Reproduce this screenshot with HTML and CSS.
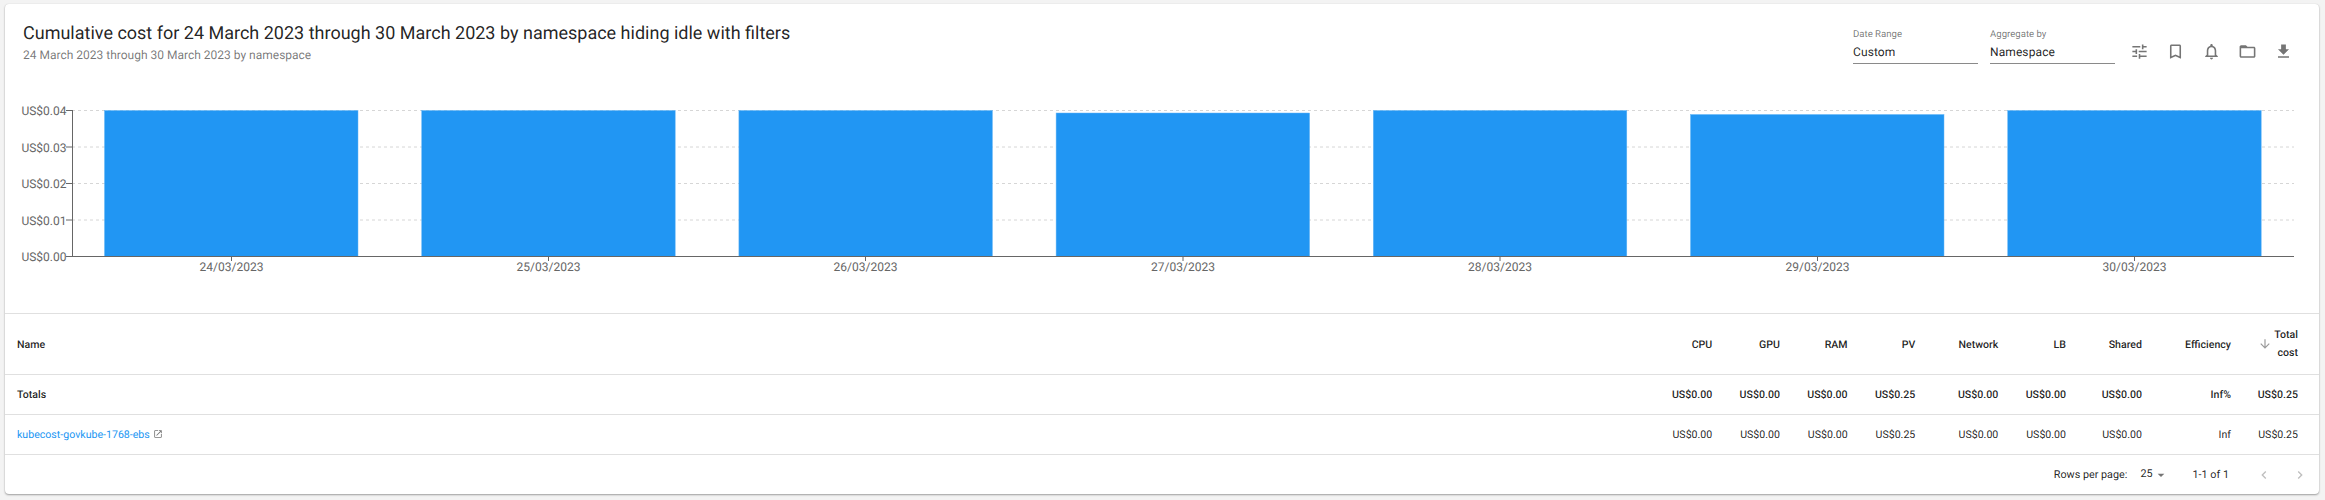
FILE: index.html
```html
<!DOCTYPE html>
<html lang="en">
<head>
<meta charset="utf-8">
<title>Cumulative cost</title>
<link rel="stylesheet" href="styles.css">
</head>
<body>
<main class="paper">
  <header class="head">
    <div class="titles">
      <h1 class="title">Cumulative cost for 24 March 2023 through 30 March 2023 by namespace hiding idle with filters</h1>
      <p class="subtitle">24 March 2023 through 30 March 2023 by namespace</p>
    </div>
    <div class="controls">
      <div class="field"><span class="field-label">Date Range</span><span class="field-value">Custom</span></div>
      <div class="field"><span class="field-label">Aggregate by</span><span class="field-value">Namespace</span></div>
      <div class="actions">
        <svg class="icon" viewBox="0 0 24 24"><path d="M3 17v2h6v-2H3zM3 5v2h10V5H3zm10 16v-2h8v-2h-8v-2h-2v6h2zM7 9v2H3v2h4v2h2V9H7zm14 4v-2H11v2h10zm-6-4h2V7h4V5h-4V3h-2v6z"/></svg>
        <svg class="icon" viewBox="0 0 24 24"><path d="M17 3H7c-1.1 0-1.99.9-1.99 2L5 21l7-3 7 3V5c0-1.1-.9-2-2-2zm0 15l-5-2.18L7 18V5h10v13z"/></svg>
        <svg class="icon" viewBox="0 0 24 24"><path d="M12 22c1.1 0 2-.9 2-2h-4c0 1.1.9 2 2 2zm6-6v-5c0-3.07-1.63-5.64-4.5-6.32V4c0-.83-.67-1.5-1.5-1.5s-1.5.67-1.5 1.5v.68C7.64 5.36 6 7.92 6 11v5l-2 2v1h16v-1l-2-2zm-2 1H8v-6c0-2.48 1.51-4.5 4-4.5s4 2.02 4 4.5v6z"/></svg>
        <svg class="icon" viewBox="0 0 24 24"><path d="M20 6h-8l-2-2H4c-1.1 0-1.99.9-1.99 2L2 18c0 1.1.9 2 2 2h16c1.1 0 2-.9 2-2V8c0-1.1-.9-2-2-2zm0 12H4V8h16v10z"/></svg>
        <svg class="icon" viewBox="0 0 24 24"><path d="M19 9h-4V3H9v6H5l7 7 7-7zM5 18v2h14v-2H5z"/></svg>
      </div>
    </div>
  </header>

  <svg class="chart" viewBox="5 100 2314 213">
    <g class="grid">
      <line x1="72" x2="2294" y1="110.5" y2="110.5"/>
      <line x1="72" x2="2294" y1="147" y2="147"/>
      <line x1="72" x2="2294" y1="183.5" y2="183.5"/>
      <line x1="72" x2="2294" y1="220" y2="220"/>
      <line x1="72" x2="2294" y1="256.5" y2="256.5"/>
    </g>
    <g class="bars">
      <rect x="104.5" y="110.5" width="253.5" height="146"/>
      <rect x="421.7" y="110.5" width="253.5" height="146"/>
      <rect x="738.9" y="110.5" width="253.5" height="146"/>
      <rect x="1056.1" y="113" width="253.5" height="143.5"/>
      <rect x="1373.3" y="110.5" width="253.5" height="146"/>
      <rect x="1690.5" y="114.5" width="253.5" height="142"/>
      <rect x="2007.7" y="110.5" width="253.5" height="146"/>
    </g>
    <g class="axis">
      <path d="M72.5 110v147M66 110.5h6M66 147h6M66 183.5h6M66 220h6M66 256.5h2228"/>
      <path d="M231.5 257v4M548.5 257v4M865.5 257v4M1183 257v4M1500 257v4M1817.5 257v4M2134.5 257v4"/>
    </g>
    <g class="y-labels">
      <text x="66.5" y="115">US$0.04</text>
      <text x="66.5" y="151.5">US$0.03</text>
      <text x="66.5" y="188">US$0.02</text>
      <text x="66.5" y="224.5">US$0.01</text>
      <text x="66.5" y="261">US$0.00</text>
    </g>
    <g class="x-labels">
      <text x="231.5" y="271">24/03/2023</text>
      <text x="548.5" y="271">25/03/2023</text>
      <text x="865.5" y="271">26/03/2023</text>
      <text x="1183" y="271">27/03/2023</text>
      <text x="1500" y="271">28/03/2023</text>
      <text x="1817.5" y="271">29/03/2023</text>
      <text x="2134.5" y="271">30/03/2023</text>
    </g>
  </svg>

  <table class="table">
    <colgroup>
      <col>
      <col class="c68"><col class="c68"><col class="c68"><col class="c68">
      <col class="c83"><col class="c68"><col class="c76"><col class="c89"><col class="c67">
    </colgroup>
    <thead>
      <tr class="row-head">
        <th class="name">Name</th>
        <th>CPU</th><th>GPU</th><th>RAM</th><th>PV</th><th>Network</th><th>LB</th><th>Shared</th><th>Efficiency</th>
        <th class="total-head">
          <span class="sort-wrap">
            <svg class="sort" viewBox="0 0 24 24"><path d="M20 12l-1.41-1.41L13 16.17V4h-2v12.17l-5.58-5.59L4 12l8 8 8-8z"/></svg>
            <span class="total-label">Total cost</span>
          </span>
        </th>
      </tr>
    </thead>
    <tbody>
      <tr class="row-total">
        <td class="name">Totals</td>
        <td>US$0.00</td><td>US$0.00</td><td>US$0.00</td><td>US$0.25</td><td>US$0.00</td><td>US$0.00</td><td>US$0.00</td><td>Inf%</td><td>US$0.25</td>
      </tr>
      <tr class="row-data">
        <td class="name"><a class="link" href="#">kubecost-govkube-1768-ebs</a><svg class="ext" viewBox="0 0 24 24"><path d="M19 19H5V5h7V3H5c-1.11 0-2 .9-2 2v14c0 1.1.89 2 2 2h14c1.1 0 2-.9 2-2v-7h-2v7zM14 3v2h3.59l-9.83 9.83 1.41 1.41L19 6.41V10h2V3h-7z"/></svg></td>
        <td>US$0.00</td><td>US$0.00</td><td>US$0.00</td><td>US$0.25</td><td>US$0.00</td><td>US$0.00</td><td>US$0.00</td><td>Inf</td><td>US$0.25</td>
      </tr>
    </tbody>
  </table>

  <footer class="pager">
    <span class="pager-text">Rows per page:</span>
    <span class="pager-select">25</span>
    <svg class="caret" viewBox="0 0 24 24"><path d="M7 10l5 5 5-5z"/></svg>
    <span class="pager-text pager-range">1-1 of 1</span>
    <svg class="chev" viewBox="0 0 24 24"><path d="M15.41 7.41L14 6l-6 6 6 6 1.41-1.41L10.83 12z"/></svg>
    <svg class="chev" viewBox="0 0 24 24"><path d="M10 6L8.59 7.41 13.17 12l-4.58 4.58L10 18l6-6z"/></svg>
  </footer>
</main>
</body>
</html>
```

FILE: styles.css
```css
* { box-sizing: border-box; }
html, body { margin: 0; padding: 0; height: 100%; }
body { background: #f3f3f3; font-family: Roboto, "Liberation Sans", sans-serif; overflow: hidden; text-rendering: geometricPrecision; }

.paper {
  width: 2314px;
  height: 490px;
  margin: 4px 0 0 5px;
  background: #fff;
  border-radius: 4px;
  box-shadow: 0 1px 2px rgba(0,0,0,.35), 0 0 1px rgba(0,0,0,.12);
  display: flex;
  flex-direction: column;
  overflow: hidden;
}

.head { height: 96px; display: flex; justify-content: space-between; flex: none; }
.titles { padding: 18px 0 0 18px; }
.title { margin: 0; font-size: 18px; line-height: 24px; font-weight: 400; color: rgba(0,0,0,.87); }
.subtitle { margin: 2px 0 0; font-size: 12px; line-height: 15px; color: rgba(0,0,0,.54); }

.controls { display: flex; align-items: flex-start; padding-top: 25px; }
.field { width: 125px; height: 35px; margin-right: 12px; display: flex; flex-direction: column; border-bottom: 1px solid #8a8a8a; }
.field-label { font-size: 9.6px; line-height: 12px; color: rgba(0,0,0,.54); }
.field-value { font-size: 12px; line-height: 18px; margin-top: 2px; letter-spacing: .1px; color: rgba(0,0,0,.87); }

.actions { display: flex; gap: 17px; margin: 13px 0 0 3px; padding-right: 26px; }
.icon { width: 19px; height: 19px; fill: #757575; display: block; }

.chart { display: block; width: 2314px; height: 213px; flex: none; }
.grid line { stroke: #d6d6d6; stroke-dasharray: 3 3; stroke-width: 1; }
.bars rect { fill: #2196f3; stroke: #64b5f6; stroke-width: .5; }
.axis path { stroke: #666; stroke-width: 1; fill: none; }
.y-labels text { font-size: 12px; fill: #666; text-anchor: end; }
.x-labels text { font-size: 12px; fill: #666; text-anchor: middle; }

.table { width: 100%; border-collapse: collapse; table-layout: fixed; border-top: 1px solid #e0e0e0; flex: none; }
.c68 { width: 67.7px; }
.c83 { width: 83px; }
.c76 { width: 76px; }
.c89 { width: 89px; }
.c67 { width: 67px; }
.table th, .table td {
  padding: 0 21px 0 0;
  text-align: right;
  font-size: 10.6px;
  border-bottom: 1px solid #e0e0e0;
  color: rgba(0,0,0,.87);
}
.table th { font-weight: 500; }
.table td { font-weight: 400; }
.table .name { text-align: left; padding: 0 0 0 12px; }
.table .total-head { padding-left: 0; }
.row-head { height: 61px; }
.row-total, .row-data { height: 40px; }
.row-total td { font-weight: 500; }
.sort-wrap { display: inline-flex; align-items: center; justify-content: flex-end; }
.total-label { display: block; width: 24px; line-height: 18px; text-align: right; }
.sort { width: 14px; height: 14px; fill: rgba(0,0,0,.4); margin-right: 2px; display: block; flex: none; }
.link { color: #2196f3; text-decoration: none; }
.ext { width: 10px; height: 10px; fill: #757575; margin-left: 3px; vertical-align: -1px; }

.pager { flex: 1; display: flex; align-items: center; justify-content: flex-end; padding-right: 11px; }
.pager-text { font-size: 10.8px; color: rgba(0,0,0,.87); }
.pager-select { font-size: 10.8px; color: rgba(0,0,0,.87); margin-left: 13px; margin-top: -3px; }
.caret { width: 16px; height: 16px; fill: #757575; margin-left: 0; }
.pager-range { margin-left: 24px; margin-right: 7px; }
.chev { width: 16px; height: 16px; fill: rgba(0,0,0,.26); margin-left: 20px; display: block; }
```
